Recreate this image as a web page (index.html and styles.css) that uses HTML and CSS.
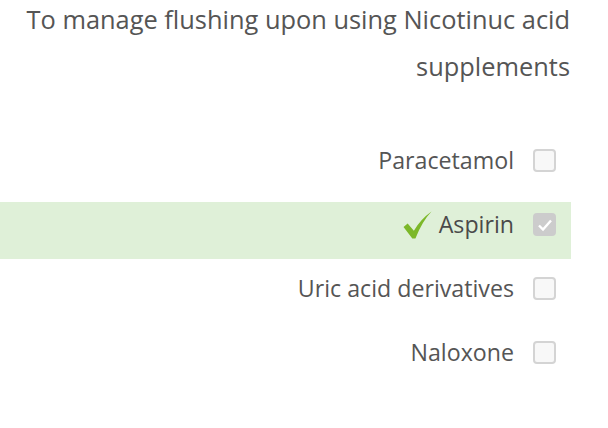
FILE: index.html
```html
<!DOCTYPE html>
<html>
<head>
<meta charset="utf-8">
<link rel="stylesheet" href="styles.css">
</head>
<body>
<div class="quiz">
  <div class="question">To manage flushing upon using Nicotinuc acid supplements</div>
  <div class="answers">
    <div class="answer">
      <span class="label">Paracetamol</span>
      <span class="box"></span>
    </div>
    <div class="answer correct">
      <svg class="tick" width="29" height="28" viewBox="0 0 28 27"><path d="M0.5 15.5 L4.5 12 L10.5 19 Q17 8 27.5 0.5 Q18.5 10 12 26.5 L9 26.5 Z" fill="#7cb829"/></svg>
      <span class="label">Aspirin</span>
      <span class="box checked"><svg width="22" height="22" viewBox="0 0 22 22"><path d="M5 11.5 L9 15.5 L17 6.5" fill="none" stroke="#fff" stroke-width="2.4"/></svg></span>
    </div>
    <div class="answer">
      <span class="label">Uric acid derivatives</span>
      <span class="box"></span>
    </div>
    <div class="answer">
      <span class="label">Naloxone</span>
      <span class="box"></span>
    </div>
  </div>
</div>
</body>
</html>
```
FILE: styles.css
```css
html, body {
  margin: 0;
  padding: 0;
  background: #fff;
}
body {
  font-family: "Open Sans", "Noto Sans", sans-serif;
  color: #555;
}
.quiz {
  width: 571px;
}
.question {
  margin-top: -4px;
  text-align: right;
  font-size: 25.4px;
  line-height: 47px;
  padding-left: 10px;
  padding-right: 1px;
}
.answers {
  margin-top: 48px;
  display: flex;
  flex-direction: column;
  gap: 7px;
}
.answer {
  height: 57px;
  box-sizing: border-box;
  padding: 11px 15px 0 0;
  display: flex;
  justify-content: flex-end;
  align-items: flex-start;
}
.answer.correct {
  background: #dff0d8;
}
.label {
  font-size: 23.2px;
  line-height: 23px;
  margin-right: 19px;
  color: #555;
}
.correct .label {
  color: #4a4a4a;
}
.tick {
  margin-right: 7px;
  margin-top: -2px;
}
.box {
  width: 23px;
  height: 23px;
  box-sizing: border-box;
  border: 2px solid #d4d4d4;
  border-radius: 4px;
  background: #f8f8f8;
}
.box.checked {
  background: #cccccc;
  border-color: #cccccc;
  display: flex;
  align-items: center;
  justify-content: center;
}
.box.checked svg {
  margin: -2px;
}
```
